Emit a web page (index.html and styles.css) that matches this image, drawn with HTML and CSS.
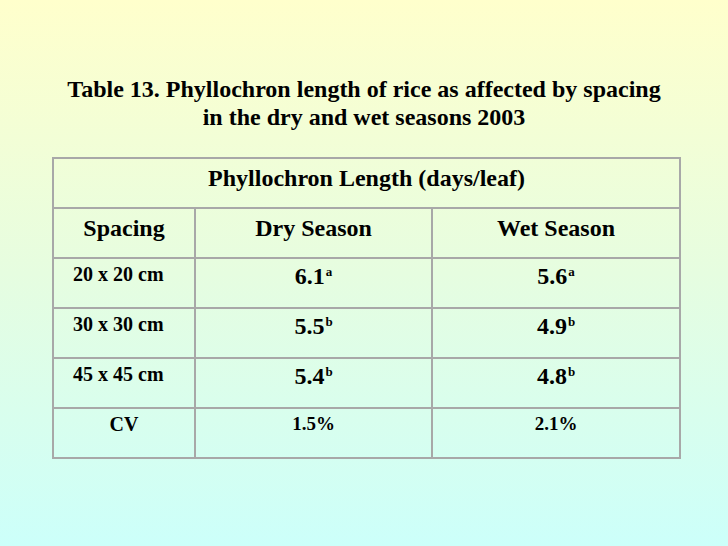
FILE: index.html
```html
<!DOCTYPE html>
<html lang="en">
<head>
    <meta charset="UTF-8">
    <title>Table 13. Phyllochron length of rice</title>
    <link rel="stylesheet" href="styles.css">
</head>
<body>
    <div class="slide">
        <h1 class="title">Table 13. Phyllochron length of rice as affected by spacing<br>in the dry and wet seasons 2003</h1>

        <table class="data">
            <colgroup>
                <col class="col-spacing">
                <col class="col-dry">
                <col class="col-wet">
            </colgroup>
            <tr class="head">
                <th colspan="3">Phyllochron Length (days/leaf)</th>
            </tr>
            <tr class="head">
                <th>Spacing</th>
                <th>Dry Season</th>
                <th>Wet Season</th>
            </tr>
            <tr>
                <td class="label">20 x 20 cm</td>
                <td class="value">6.1<sup>a</sup></td>
                <td class="value">5.6<sup>a</sup></td>
            </tr>
            <tr>
                <td class="label">30 x 30 cm</td>
                <td class="value">5.5<sup>b</sup></td>
                <td class="value">4.9<sup>b</sup></td>
            </tr>
            <tr>
                <td class="label">45 x 45 cm</td>
                <td class="value">5.4<sup>b</sup></td>
                <td class="value">4.8<sup>b</sup></td>
            </tr>
            <tr>
                <td class="cv">CV</td>
                <td class="pct">1.5%</td>
                <td class="pct">2.1%</td>
            </tr>
        </table>
    </div>
</body>
</html>
```

FILE: styles.css
```css
body {
    margin: 0;
    font-family: "Liberation Serif", "Times New Roman", serif;
    color: #000;
}
.slide {
    width: 728px;
    height: 546px;
    background: linear-gradient(#ffffcc, #e6fde0 50%, #ccfffa);
    padding-top: 75px;
    box-sizing: border-box;
    overflow: hidden;
}
.title {
    margin: 0;
    font-size: 24px;
    line-height: 28px;
    font-weight: bold;
    text-align: center;
}
.data {
    margin: 26px 0 0 52px;
    border-collapse: collapse;
    border: 2px solid #999;
    table-layout: fixed;
    width: 627px;
}
.col-spacing {
    width: 142px;
}
.col-dry {
    width: 237px;
}
.col-wet {
    width: 248px;
}
.data tr {
    height: 50px;
}
.data th,
.data td {
    border: 2px solid #a8a8a8;
    vertical-align: top;
    text-align: center;
    padding: 3px 0 0 0;
    font-weight: bold;
}
.data th {
    font-size: 24px;
    line-height: 28px;
    padding-top: 5px;
}
.data .label {
    text-align: left;
    padding-left: 19px;
    font-size: 20px;
    line-height: 24px;
}
.data .cv {
    font-size: 20px;
    line-height: 24px;
}
.value {
    font-size: 24px;
    line-height: 28px;
}
.value sup {
    font-size: 13px;
    line-height: 1;
    vertical-align: top;
    position: relative;
    top: 3px;
    margin-left: 1px;
}
.pct {
    font-size: 19px;
    line-height: 24px;
}
```
